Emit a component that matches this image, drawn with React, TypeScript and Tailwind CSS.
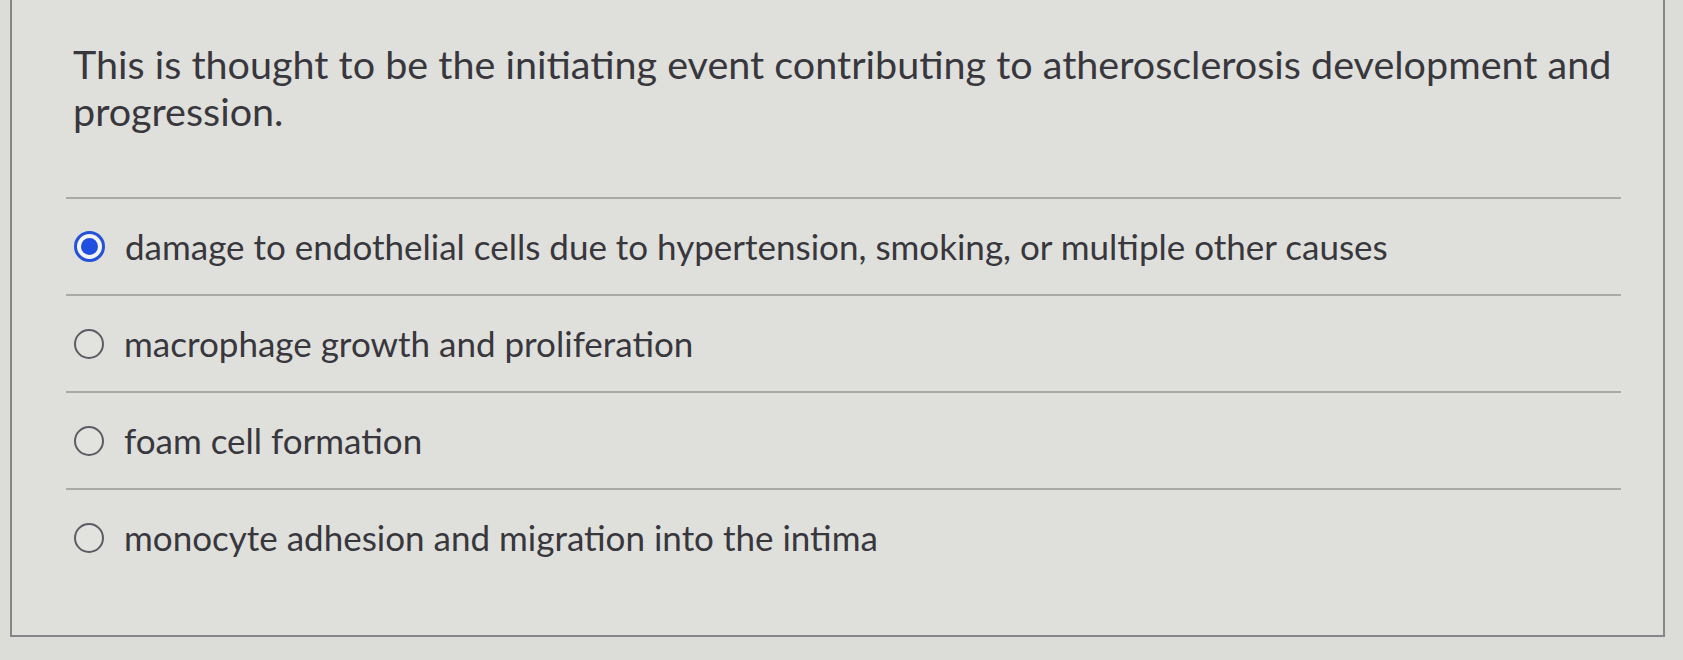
import React from "react";

const options = [
  "damage to endothelial cells due to hypertension, smoking, or multiple other causes",
  "macrophage growth and proliferation",
  "foam cell formation",
  "monocyte adhesion and migration into the intima",
];

function Radio({ checked }: { checked: boolean }) {
  if (checked) {
    return (
      <div className="h-[31px] w-[31px] shrink-0 rounded-full border-[3px] border-[#2452d8] bg-[#f4f4f2] p-[4px]">
        <div className="h-full w-full rounded-full bg-[#1f4fe0]" />
      </div>
    );
  }
  return <div className="h-[30px] w-[30px] shrink-0 rounded-full border-[2.5px] border-[#5d5b63] bg-[#e2e2de]" />;
}

export default function App() {
  const selected = 0;
  return (
    <div className="min-h-[660px] bg-[#dcdcd8] pl-[10px] pr-[18px] font-['Lato','Liberation_Sans',sans-serif] text-[#38373d]">
      <div className="border-x-2 border-b-2 border-[#85858a] bg-[#dfdfdb] pb-[50px]">
        <div className="ml-[54px] mr-[42px]">
          <p className="pl-[7px] pt-[40px] text-[39.5px] leading-[47px]">
            This is thought to be the initiating event contributing to atherosclerosis development and
            <br />
            progression.
          </p>
          <ul className="mt-[63px]">
            {options.map((o, i) => (
              <li key={o} className="flex h-[97px] items-center gap-[20px] border-t-2 border-[#a9a9a8] pl-[8px]">
                <Radio checked={i === selected} />
                <span className="text-[35px] leading-[47px]">{o}</span>
              </li>
            ))}
          </ul>
        </div>
      </div>
    </div>
  );
}
